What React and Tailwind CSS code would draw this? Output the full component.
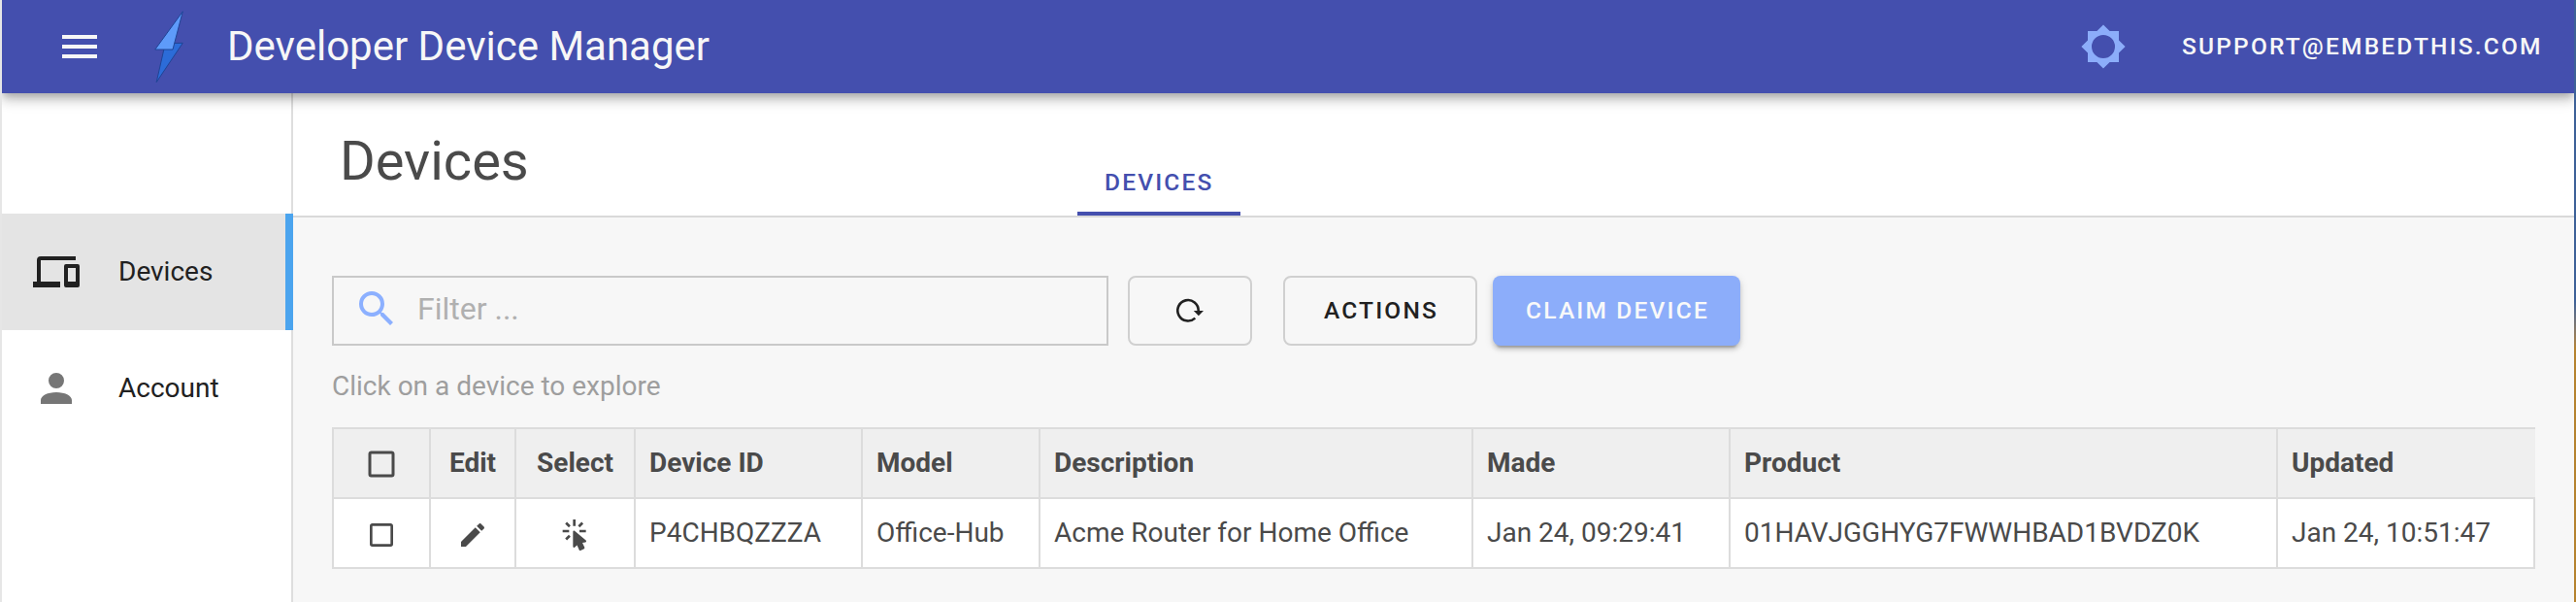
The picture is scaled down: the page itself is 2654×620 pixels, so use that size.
import React, { useState } from "react";

// 24x24 icon paths
const icons = {
  menu: "M3,6H21V8H3V6M3,11H21V13H3V11M3,16H21V18H3V16Z",
  brightness:
    "M20,15.31L23.31,12L20,8.69V4H15.31L12,0.69L8.69,4H4V8.69L0.69,12L4,15.31V20H8.69L12,23.31L15.31,20H20V15.31M12,18A6,6 0 0,1 6,12A6,6 0 0,1 12,6A6,6 0 0,1 18,12A6,6 0 0,1 12,18Z",
  devices:
    "M4,6H22V4H4A2,2 0 0,0 2,6V17H0V20H14V17H4V6M23,8H17A1,1 0 0,0 16,9V19A1,1 0 0,0 17,20H23A1,1 0 0,0 24,19V9A1,1 0 0,0 23,8M22,17H18V10H22V17Z",
  account:
    "M12,4A4,4 0 0,1 16,8A4,4 0 0,1 12,12A4,4 0 0,1 8,8A4,4 0 0,1 12,4M12,14C16.42,14 20,15.79 20,18V20H4V18C4,15.79 7.58,14 12,14Z",
  magnify:
    "M9.5,3A6.5,6.5 0 0,1 16,9.5C16,11.11 15.41,12.59 14.44,13.73L14.71,14H15.5L20.5,19L19,20.5L14,15.5V14.71L13.73,14.44C12.59,15.41 11.11,16 9.5,16A6.5,6.5 0 0,1 3,9.5A6.5,6.5 0 0,1 9.5,3M9.5,5C7,5 5,7 5,9.5C5,12 7,14 9.5,14C12,14 14,12 14,9.5C14,7 12,5 9.5,5Z",
  checkbox:
    "M19,3H5C3.89,3 3,3.89 3,5V19A2,2 0 0,0 5,21H19A2,2 0 0,0 21,19V5C21,3.89 20.1,3 19,3M19,5V19H5V5H19Z",
  pencil:
    "M20.71,7.04C21.1,6.65 21.1,6 20.71,5.63L18.37,3.29C18,2.9 17.35,2.9 16.96,3.29L15.12,5.12L18.87,8.87M3,17.25V21H6.75L17.81,9.93L14.06,6.18L3,17.25Z",
  click:
    "M10.76,8.69A0.76,0.76 0 0,0 10,9.45V20.9C10,21.32 10.34,21.66 10.76,21.66C10.95,21.66 11.11,21.6 11.24,21.5L13.15,19.95L14.81,23.57C14.94,23.84 15.21,24 15.5,24C15.61,24 15.72,24 15.83,23.92L18.59,22.64C18.97,22.46 19.15,22 18.95,21.63L17.28,18L19.69,17.55C19.85,17.5 20,17.43 20.12,17.29C20.39,16.97 20.35,16.5 20,16.21L11.26,8.86L11.25,8.87C11.12,8.76 10.95,8.69 10.76,8.69M15,10V8H20V10H15M13.83,4.76L16.66,1.93L18.07,3.34L15.24,6.17L13.83,4.76M10,0H12V5H10V0M3.93,14.66L6.76,11.83L8.17,13.24L5.34,16.07L3.93,14.66M3.93,3.34L5.34,1.93L8.17,4.76L6.76,6.17L3.93,3.34M7,10H2V8H7V10Z",
};

function Icon({ name, className }) {
  return (
    <svg viewBox="0 0 24 24" fill="currentColor" className={`shrink-0 ${className}`}>
      <path d={icons[name]} />
    </svg>
  );
}

function Logo() {
  return (
    <svg viewBox="0 0 32 76" className="w-8 h-[76px] shrink-0" stroke="#1f4496" strokeWidth="1">
      <path d="M11.5 38 L21 34.5 L30.3 34.3 L3.2 74.6 Z" fill="#2c6cd8" />
      <path d="M30.3 1.8 L1.8 41 L20 41 Z" fill="#5e9bfa" />
    </svg>
  );
}

function RefreshIcon() {
  return (
    <svg viewBox="0 0 28 26" className="w-7 h-[26px]">
      <path d="M19.3 20.6 A10.7 10.7 0 1 1 22.7 13" fill="none" stroke="#212121" strokeWidth="2.6" />
      <path d="M17.8 13 H28 L22.9 18.2 Z" fill="#212121" />
    </svg>
  );
}

function Header() {
  return (
    <header className="relative z-10 flex items-center h-24 shrink-0 bg-[#444fae] text-[#f7f7f7] shadow-[0_4px_8px_-2px_rgba(0,0,0,0.2),0_8px_10px_0_rgba(0,0,0,0.14),0_2px_20px_0_rgba(0,0,0,0.12)]">
      <button className="ml-14" aria-label="Menu">
        <Icon name="menu" className="size-12" />
      </button>
      <div className="ml-[52px]">
        <Logo />
      </div>
      <div className="ml-11 text-[42px] leading-none">Developer Device Manager</div>
      <Icon name="brightness" className="size-12 ml-auto text-[#8cadfa]" />
      <div className="w-[461px] pl-[57px] pt-px text-[24.5px] font-medium tracking-[0.0893em]">
        SUPPORT@EMBEDTHIS.COM
      </div>
    </header>
  );
}

const navItems = [
  { icon: "devices", label: "Devices" },
  { icon: "account", label: "Account" },
];

function Sidebar() {
  const [active, setActive] = useState("Devices");
  return (
    <nav className="w-[300px] shrink-0 pt-[124px] bg-white border-r-2 border-[#dedede]">
      {navItems.map((item) => (
        <button
          key={item.label}
          onClick={() => setActive(item.label)}
          className={`flex items-center h-[120px] pl-8 text-[28px] text-[#212121] ${
            active === item.label ? "w-[300px] bg-[#e4e4e4] border-r-8 border-[#4ba4ee]" : "w-full"
          }`}
        >
          <Icon
            name={item.icon}
            className={`size-12 ${active === item.label ? "text-[#212121]" : "text-[#767676]"}`}
          />
          <span className="ml-10 pb-px">{item.label}</span>
        </button>
      ))}
    </nav>
  );
}

function PageBar() {
  return (
    <div className="flex h-32 shrink-0 bg-white border-b-2 border-[#d9d9d9]">
      <h1 className="w-[808px] pl-12 pt-[37px] text-[56px] leading-[66px] text-[#4a4a4a]">Devices</h1>
      <button className="w-[168px] pl-7 pt-[63px] text-left text-[24.5px] font-medium tracking-[0.0893em] text-[#444fae] border-b-4 border-[#444fae]">
        DEVICES
      </button>
    </div>
  );
}

function Toolbar() {
  const [filter, setFilter] = useState("");
  return (
    <div className="flex h-[72px] text-[24.5px] font-medium tracking-[0.0893em]">
      <label className="flex w-[800px] border-2 border-[#c9c9c9] pl-5">
        <Icon name="magnify" className="size-12 mt-2 text-[#8cb0ff]" />
        <input
          value={filter}
          onChange={(e) => setFilter(e.target.value)}
          placeholder="Filter ..."
          className="grow ml-[18px] pb-1 text-[32px] font-normal tracking-normal outline-none placeholder:text-[#b0b0b0]"
        />
      </label>
      <button
        className="flex items-center justify-center w-32 ml-5 border-2 border-[#d0d0d0] rounded-lg"
        aria-label="Refresh"
      >
        <RefreshIcon />
      </button>
      <button className="w-[200px] ml-8 pl-0.5 pt-px border-2 border-[#d0d0d0] rounded-lg text-[#212121]">ACTIONS</button>
      <button className="w-[255px] ml-4 pl-0.5 pt-px rounded-lg bg-[#8cadfa] text-[#f9f9f9] shadow-[0_6px_2px_-4px_rgba(0,0,0,0.2),0_4px_4px_0_rgba(0,0,0,0.14),0_2px_10px_0_rgba(0,0,0,0.12)]">
        CLAIM DEVICE
      </button>
    </div>
  );
}

const columns = ["Device ID", "Model", "Description", "Made", "Product", "Updated"];

const devices = [
  {
    "Device ID": "P4CHBQZZZA",
    Model: "Office-Hub",
    Description: "Acme Router for Home Office",
    Made: "Jan 24, 09:29:41",
    Product: "01HAVJGGHYG7FWWHBAD1BVDZ0K",
    Updated: "Jan 24, 10:51:47",
  },
];

function DeviceTable() {
  return (
    <table className="w-[2270px] mt-[26px] table-fixed border-separate border-spacing-0 text-[28px] leading-[33px] text-[#4a4a4a]">
      <colgroup>
        <col className="w-[100px]" />
        <col className="w-[88px]" />
        <col className="w-[123px]" />
        <col className="w-[234px]" />
        <col className="w-[183px]" />
        <col className="w-[446px]" />
        <col className="w-[265px]" />
        <col className="w-[564px]" />
        <col className="w-[267px]" />
      </colgroup>
      <thead>
        <tr className="h-[72px] text-left font-bold *:bg-[#efefef] *:border-l-2 *:border-t-2 *:border-[#dcdcdc]">
          <th>
            <Icon name="checkbox" className="size-9 mx-auto mt-0.5" />
          </th>
          <th className="text-center pb-px">Edit</th>
          <th className="text-center pb-px">Select</th>
          {columns.map((col) => (
            <th key={col} className="pl-3.5 pb-px">
              {col}
            </th>
          ))}
        </tr>
      </thead>
      <tbody>
        {devices.map((device) => (
          <tr
            key={device["Device ID"]}
            className="h-[74px] *:bg-white *:border-l-2 *:border-y-2 *:border-[#dcdcdc] *:last:border-r-2"
          >
            <td>
              <Icon name="checkbox" className="size-8 mx-auto mt-1" />
            </td>
            <td>
              <Icon name="pencil" className="size-8 mx-auto mt-1" />
            </td>
            <td>
              <Icon name="click" className="size-8 mx-auto mt-1" />
            </td>
            {columns.map((col) => (
              <td key={col} className="pl-3.5 pb-px">
                {device[col]}
              </td>
            ))}
          </tr>
        ))}
      </tbody>
    </table>
  );
}

export default function App() {
  return (
    <div className="flex w-[2654px] h-[620px] overflow-hidden bg-[#e6e6e6] font-[Roboto,sans-serif]">
      <div className="flex flex-col w-[2650px] ml-0.5 overflow-hidden">
        <Header />
        <div className="flex grow">
          <Sidebar />
          <main className="flex flex-col grow bg-[#f7f7f7]">
            <PageBar />
            <div className="pl-10 pt-[60px]">
              <Toolbar />
              <p className="mt-[25px] text-[28px] leading-[33px] text-[#9e9e9e]">Click on a device to explore</p>
              <DeviceTable />
            </div>
          </main>
        </div>
      </div>
      <div className="w-0.5 bg-linear-to-b from-[#3d6198] from-50% to-[#b5832f] to-58%" />
    </div>
  );
}
